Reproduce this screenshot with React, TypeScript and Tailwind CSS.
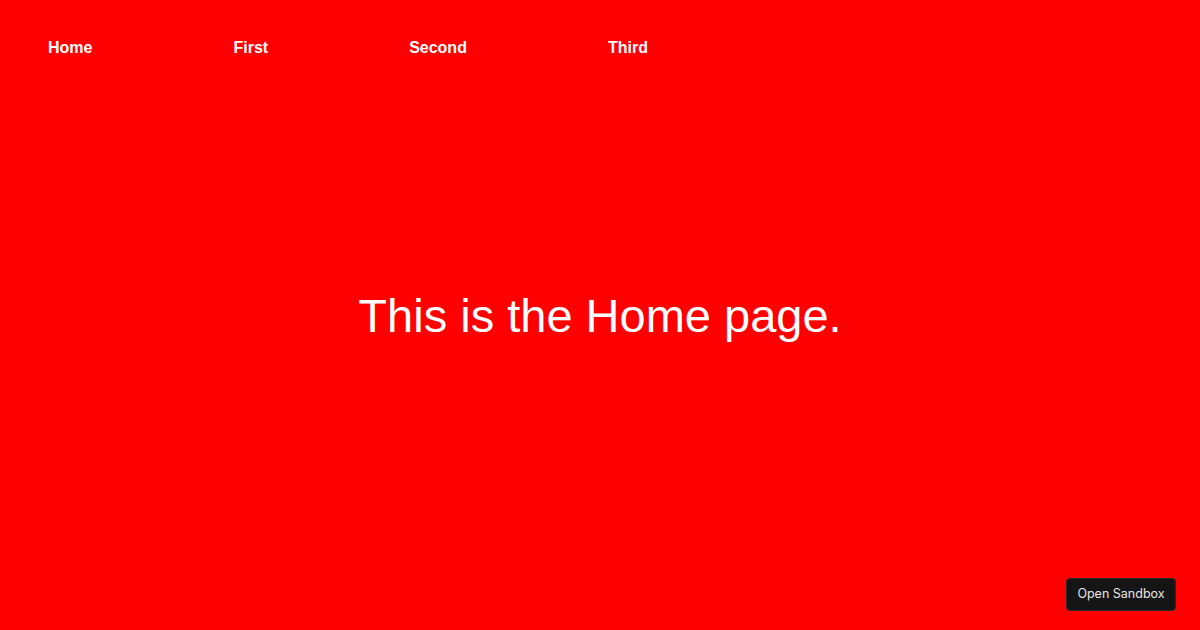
export default function App() {
  const links = ["Home", "First", "Second", "Third"];
  return (
    <div className="relative flex h-[630px] w-full flex-col bg-[#ff0000] text-white font-['Liberation_Sans',Arial,sans-serif]">
      <nav className="flex gap-[141px] px-[48px] pt-[39px] text-[16px] font-bold leading-[18px]">
        {links.map((l) => (
          <a key={l} href="#" className="text-white">
            {l}
          </a>
        ))}
      </nav>
      <main className="absolute inset-0 flex items-center justify-center">
        <h1 className="text-[47px] font-normal leading-none">This is the Home page.</h1>
      </main>
      <button
        type="button"
        className="absolute bottom-[19px] right-[24px] h-[33px] w-[110px] rounded-[4px] border border-[#2a2a2a] bg-[#151515] text-[12.5px] text-[#e5e5e5] font-['Inter',sans-serif]"
      >
        Open Sandbox
      </button>
    </div>
  );
}
